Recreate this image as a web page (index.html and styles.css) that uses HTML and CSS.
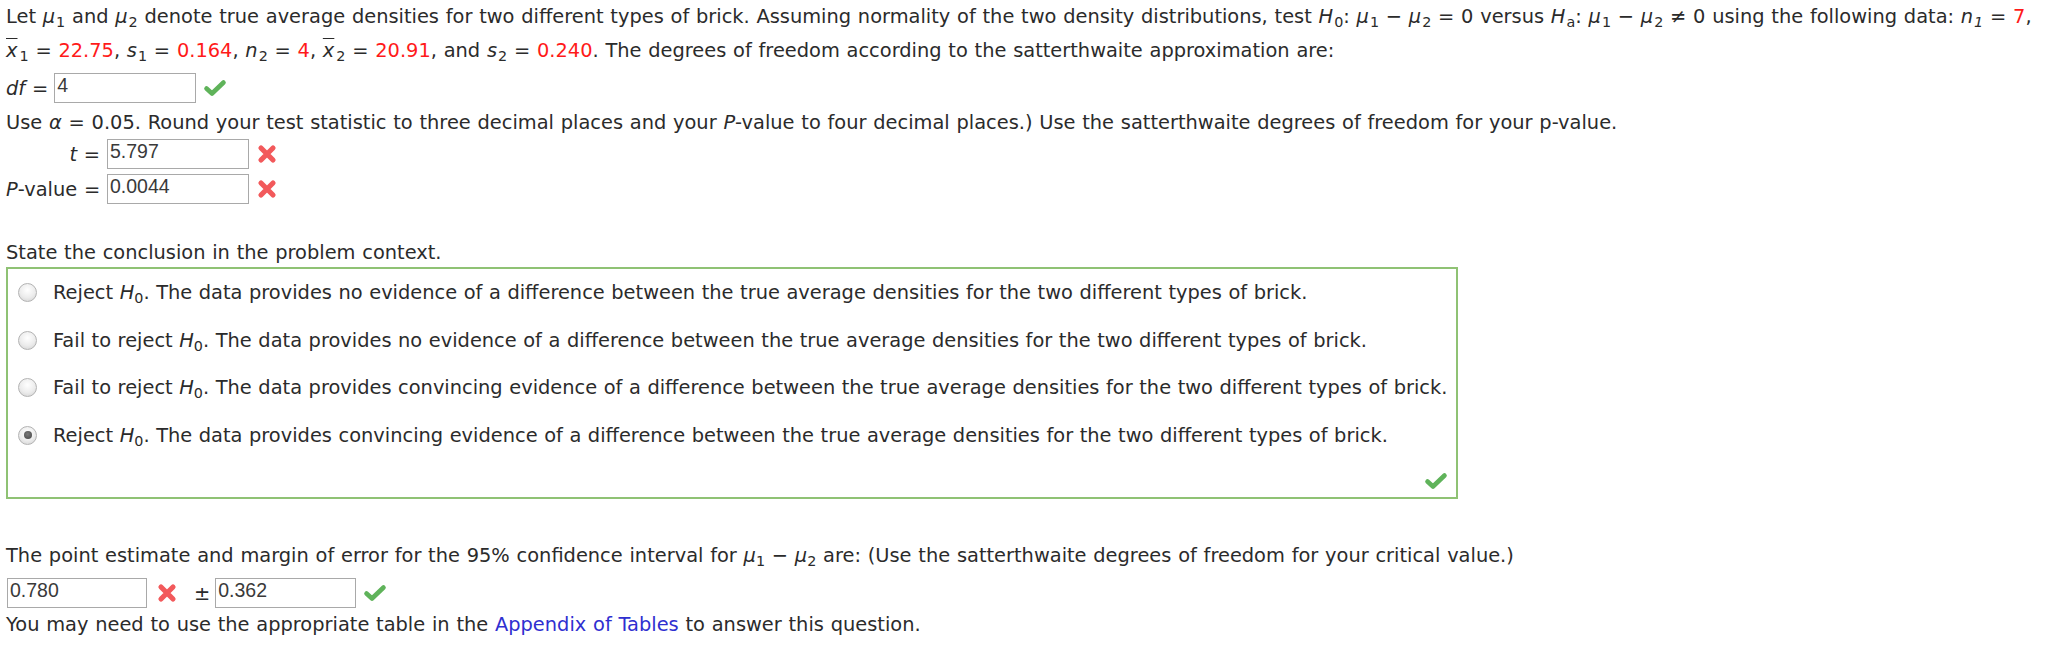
FILE: index.html
```html
<!DOCTYPE html>
<html>
<head>
<meta charset="utf-8">
<link rel="stylesheet" href="styles.css">
</head>
<body>
<div class="page">
  <p class="q">Let <i>μ</i><sub>1</sub> and <i>μ</i><sub>2</sub> denote true average densities for two different types of brick. Assuming normality of the two density distributions, test <i>H</i><sub>0</sub>: <i>μ</i><sub>1</sub> − <i>μ</i><sub>2</sub> = 0 versus <i>H</i><sub>a</sub>: <i>μ</i><sub>1</sub> − <i>μ</i><sub>2</sub> ≠ 0 using the following data: <i>n</i><sub class="it">1</sub> = <span class="red">7</span>,<br><i class="bar">x</i><sub>1</sub> = <span class="red">22.75</span>, <i>s</i><sub>1</sub> = <span class="red">0.164</span>, <i>n</i><sub>2</sub> = <span class="red">4</span>, <i class="bar">x</i><sub>2</sub> = <span class="red">20.91</span>, and <i>s</i><sub>2</sub> = <span class="red">0.240</span>. The degrees of freedom according to the satterthwaite approximation are:</p>

  <div class="row df">
    <span class="lbl-inline"><i>df</i> =</span>
    <span class="box">4</span>
    <svg class="ok" viewBox="0 0 24 18"><path d="M3.5 9.5 L9 14.5 L20.5 3.5" fill="none" stroke="#5fb35a" stroke-width="4.6" stroke-linecap="round" stroke-linejoin="round"/></svg>
  </div>

  <p class="use">Use <i>α</i> = 0.05. Round your test statistic to three decimal places and your <i>P</i>-value to four decimal places.) Use the satterthwaite degrees of freedom for your p-value.</p>

  <div class="row">
    <span class="lbl"><i>t</i> =</span>
    <span class="box">5.797</span>
    <svg class="bad" viewBox="0 0 20 20"><path d="M4 4 L16 16 M16 4 L4 16" fill="none" stroke="#f2595b" stroke-width="5.2" stroke-linecap="round"/></svg>
  </div>
  <div class="row gap5">
    <span class="lbl"><i>P</i>-value =</span>
    <span class="box">0.0044</span>
    <svg class="bad" viewBox="0 0 20 20"><path d="M4 4 L16 16 M16 4 L4 16" fill="none" stroke="#f2595b" stroke-width="5.2" stroke-linecap="round"/></svg>
  </div>

  <p class="state">State the conclusion in the problem context.</p>

  <div class="choices">
    <div class="choice"><span class="radio"></span><span class="ctext">Reject <i>H</i><sub>0</sub>. The data provides no evidence of a difference between the true average densities for the two different types of brick.</span></div>
    <div class="choice"><span class="radio"></span><span class="ctext">Fail to reject <i>H</i><sub>0</sub>. The data provides no evidence of a difference between the true average densities for the two different types of brick.</span></div>
    <div class="choice"><span class="radio"></span><span class="ctext">Fail to reject <i>H</i><sub>0</sub>. The data provides convincing evidence of a difference between the true average densities for the two different types of brick.</span></div>
    <div class="choice"><span class="radio on"></span><span class="ctext">Reject <i>H</i><sub>0</sub>. The data provides convincing evidence of a difference between the true average densities for the two different types of brick.</span></div>
    <div class="foot">
      <svg class="ok" viewBox="0 0 24 18"><path d="M3.5 9.5 L9 14.5 L20.5 3.5" fill="none" stroke="#5fb35a" stroke-width="4.6" stroke-linecap="round" stroke-linejoin="round"/></svg>
    </div>
  </div>

  <p class="pe">The point estimate and margin of error for the 95% confidence interval for <i>μ</i><sub>1</sub> − <i>μ</i><sub>2</sub> are: (Use the satterthwaite degrees of freedom for your critical value.)</p>

  <div class="row ci">
    <span class="box w140">0.780</span>
    <svg class="bad" viewBox="0 0 20 20"><path d="M4 4 L16 16 M16 4 L4 16" fill="none" stroke="#f2595b" stroke-width="5.2" stroke-linecap="round"/></svg>
    <span class="pm">±</span>
    <span class="box w141">0.362</span>
    <svg class="ok" viewBox="0 0 24 18"><path d="M3.5 9.5 L9 14.5 L20.5 3.5" fill="none" stroke="#5fb35a" stroke-width="4.6" stroke-linecap="round" stroke-linejoin="round"/></svg>
  </div>

  <p class="note">You may need to use the appropriate table in the <a class="link" href="#">Appendix of Tables</a> to answer this question.</p>
</div>
</body>
</html>
```

FILE: styles.css
```css
html, body {
  margin: 0;
  padding: 0;
  background: #ffffff;
}

.page {
  padding: 0 6px;
  font-family: "DejaVu Sans", Verdana, sans-serif;
  font-size: 19.4px;
  word-spacing: 0.6px;
  color: #2b2b2b;
}

p {
  margin: 0;
}

i {
  font-style: italic;
}

sub {
  font-size: 74%;
  vertical-align: -4px;
  line-height: 0;
}

sub.it {
  font-style: italic;
}

.q sub {
  padding-left: 1px;
}

.red {
  color: #ff1a1a;
}

.bar {
  text-decoration: overline;
  text-decoration-thickness: 1px;
  padding-right: 1px;
}

.q {
  line-height: 34px;
  white-space: nowrap;
}

.row {
  display: flex;
  align-items: center;
  height: 30px;
  white-space: nowrap;
}

.row.df {
  margin-top: 5px;
}

.row.gap5 {
  margin-top: 5px;
}

.lbl-inline {
  margin-right: 6px;
}

.lbl {
  width: 94px;
  text-align: right;
  margin-right: 7px;
}

.box {
  box-sizing: border-box;
  display: flex;
  align-items: center;
  width: 142px;
  height: 30px;
  border: 1px solid #a9a9a9;
  padding: 0 3px 6px 2px;
  font-family: "Liberation Sans", Arial, sans-serif;
  font-size: 19.5px;
  word-spacing: 0;
  color: #3a3a3a;
  background: #fff;
}

.box.w140 {
  width: 140px;
  margin-left: 1px;
}

.box.w141 {
  width: 141px;
}

.ok {
  width: 24px;
  height: 18px;
  margin-left: 7px;
}

.bad {
  width: 20px;
  height: 20px;
  margin-left: 8px;
}

.ci .bad {
  margin-left: 10px;
}

.pm {
  margin-left: 17px;
  margin-right: 5px;
}

.use {
  margin-top: 3px;
  line-height: 33px;
  white-space: nowrap;
}

.state {
  margin-top: 39px;
  line-height: 20px;
}

.choices {
  box-sizing: border-box;
  margin-top: 4px;
  width: 1452px;
  border: 2px solid #8fc274;
  display: flex;
  flex-direction: column;
}

.choice {
  display: flex;
  align-items: center;
  height: 47.5px;
  padding-left: 10px;
  white-space: nowrap;
  word-spacing: 0.4px;
}

.radio {
  box-sizing: border-box;
  width: 19px;
  height: 19px;
  border-radius: 50%;
  border: 1px solid #b3b3b3;
  background: radial-gradient(circle at 50% 35%, #ffffff 0%, #ececec 55%, #cfcfcf 100%);
  margin-right: 16px;
  display: flex;
  align-items: center;
  justify-content: center;
  flex: none;
}

.radio.on::after {
  content: "";
  width: 8px;
  height: 8px;
  border-radius: 50%;
  background: radial-gradient(circle at 45% 40%, #7a7a7a 0%, #444 100%);
}

.foot {
  height: 38px;
  display: flex;
  justify-content: flex-end;
  align-items: flex-end;
  padding: 0 8px 7px 0;
  box-sizing: border-box;
}

.foot .ok {
  margin-left: 0;
}

.pe {
  margin-top: 47px;
  line-height: 20px;
  white-space: nowrap;
}

.row.ci {
  margin-top: 12px;
}

.note {
  margin-top: 7px;
  line-height: 20px;
}

.link {
  color: #2f2fd0;
  text-decoration: none;
}
```
